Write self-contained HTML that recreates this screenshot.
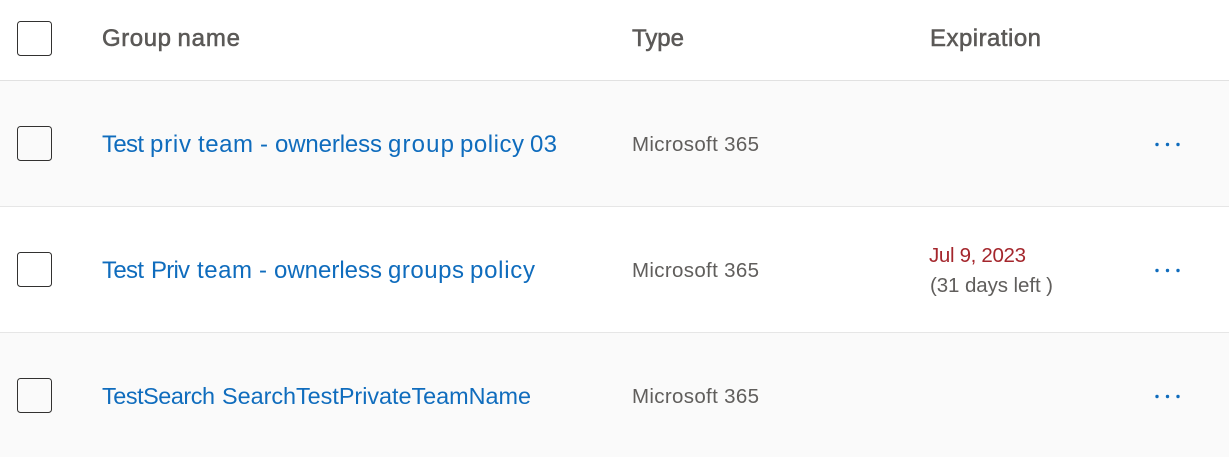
<!DOCTYPE html>
<html>
<head>
<meta charset="utf-8">
<style>
html,body{margin:0;padding:0;background:#fff;width:1229px;height:457px;overflow:hidden}
svg{display:block}
text{font-family:"Liberation Sans",sans-serif}
.h{font-size:24px;fill:#5b5957;stroke:#5b5957;stroke-width:.55px}
.l{font-size:24px;fill:#0f6cbd}
.s{font-size:23.4px}
.t{font-size:20.5px;fill:#605e5c}
.r{font-size:20.5px;fill:#a4262c}
.c{fill:none;stroke:#323130;stroke-width:1}
.d{fill:#0f6cbd}
</style>
</head>
<body>
<svg width="1229" height="457" viewBox="0 0 1229 457" xmlns="http://www.w3.org/2000/svg">
<rect x="0" y="0" width="1229" height="457" fill="#fff"/>
<rect x="0" y="81" width="1229" height="125" fill="#fafafa"/>
<rect x="0" y="333" width="1229" height="124" fill="#fafafa"/>
<rect x="0" y="80" width="1229" height="1" fill="#e1e1e1"/>
<rect x="0" y="206" width="1229" height="1" fill="#e6e6e6"/>
<rect x="0" y="332" width="1229" height="1" fill="#e6e6e6"/>

<rect class="c" x="17.5" y="21.5" width="34" height="34" rx="3"/>
<rect class="c" x="17.5" y="126.5" width="34" height="34" rx="3"/>
<rect class="c" x="17.5" y="252.5" width="34" height="34" rx="3"/>
<rect class="c" x="17.5" y="378.5" width="34" height="34" rx="3"/>

<text class="h" x="102" y="46" textLength="69" lengthAdjust="spacing">Group</text>
<text class="h" x="177.5" y="46" textLength="62.5" lengthAdjust="spacing">name</text>
<text class="h" x="632" y="46" textLength="52" lengthAdjust="spacing">Type</text>
<text class="h" x="930" y="46" textLength="111" lengthAdjust="spacing">Expiration</text>

<text class="l" x="102" y="152" textLength="42" lengthAdjust="spacing">Test</text>
<text class="l" x="150" y="152" textLength="41" lengthAdjust="spacing">priv</text>
<text class="l" x="198" y="152" textLength="55" lengthAdjust="spacing">team</text>
<text class="l" x="260" y="152" textLength="8" lengthAdjust="spacing">-</text>
<text class="l" x="275" y="152" textLength="107" lengthAdjust="spacing">ownerless</text>
<text class="l" x="388" y="152" textLength="66" lengthAdjust="spacing">group</text>
<text class="l" x="460" y="152" textLength="64" lengthAdjust="spacing">policy</text>
<text class="l" x="530" y="152" textLength="27" lengthAdjust="spacing">03</text>

<text class="l" x="102" y="278" textLength="42" lengthAdjust="spacing">Test</text>
<text class="l" x="151" y="278" textLength="39" lengthAdjust="spacing">Priv</text>
<text class="l" x="197" y="278" textLength="55" lengthAdjust="spacing">team</text>
<text class="l" x="259" y="278" textLength="8" lengthAdjust="spacing">-</text>
<text class="l" x="274" y="278" textLength="108" lengthAdjust="spacing">ownerless</text>
<text class="l" x="388" y="278" textLength="76" lengthAdjust="spacing">groups</text>
<text class="l" x="470" y="278" textLength="65" lengthAdjust="spacing">policy</text>

<text class="l s" x="102" y="404" textLength="113" lengthAdjust="spacing">TestSearch</text>
<text class="l s" x="222" y="404" textLength="309" lengthAdjust="spacing">SearchTestPrivateTeamName</text>

<text class="t" x="632" y="151" textLength="127" lengthAdjust="spacing">Microsoft 365</text>
<text class="t" x="632" y="277" textLength="127" lengthAdjust="spacing">Microsoft 365</text>
<text class="t" x="632" y="403" textLength="127" lengthAdjust="spacing">Microsoft 365</text>

<text class="r" x="929" y="262" textLength="97" lengthAdjust="spacing">Jul 9, 2023</text>
<text class="t" x="930" y="292" textLength="123" lengthAdjust="spacing">(31 days left )</text>

<circle class="d" cx="1157" cy="144.5" r="1.7"/><circle class="d" cx="1167.5" cy="144.5" r="1.7"/><circle class="d" cx="1178" cy="144.5" r="1.7"/>
<circle class="d" cx="1157" cy="270.5" r="1.7"/><circle class="d" cx="1167.5" cy="270.5" r="1.7"/><circle class="d" cx="1178" cy="270.5" r="1.7"/>
<circle class="d" cx="1157" cy="396.5" r="1.7"/><circle class="d" cx="1167.5" cy="396.5" r="1.7"/><circle class="d" cx="1178" cy="396.5" r="1.7"/>
</svg>
</body>
</html>
